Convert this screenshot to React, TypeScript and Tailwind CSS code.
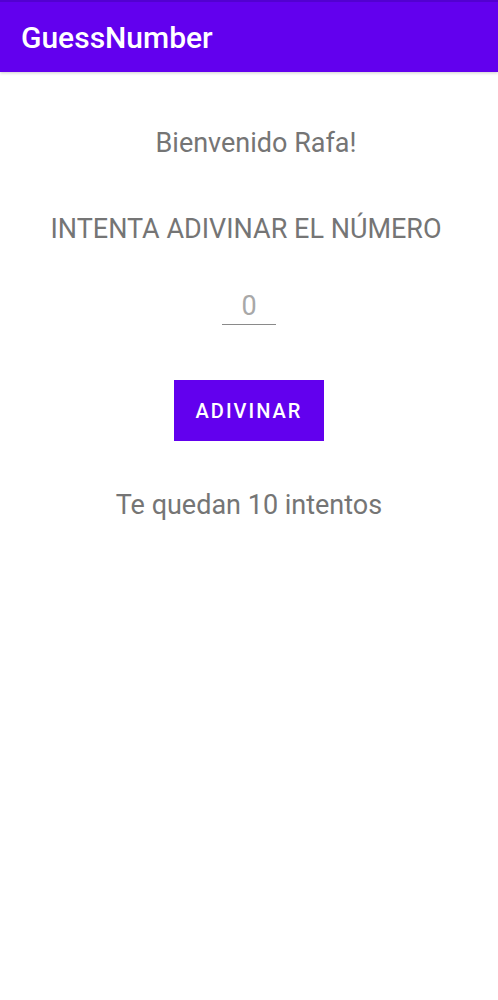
export default function App() {
  return (
    <div className="h-[1000px] w-[498px] bg-white" style={{ fontFamily: 'Roboto, "Liberation Sans", sans-serif' }}>
      <div className="h-[72px] border-t-2 border-[#5200d0] bg-[#6200ee] pl-[21px] shadow-[0_1px_3px_rgba(0,0,0,0.2)]">
        <div className="pt-[18px] text-[30px] font-medium leading-[36px] text-white">GuessNumber</div>
      </div>
      <div className="flex flex-col items-center text-[#757575]">
        <div className="mt-[55px] ml-[14px] text-[27px] leading-[32px]">Bienvenido Rafa!</div>
        <div className="mt-[54px] mr-[6px] text-[27px] leading-[32px]">INTENTA ADIVINAR EL NÚMERO</div>
        <div className="mt-[46px] flex h-[34px] w-[54px] items-start justify-center border-b border-[#8a8a8a] text-[27px] leading-[30px] text-[#a8a8a8]">
          0
        </div>
        <button className="mt-[55px] h-[61px] w-[150px] bg-[#6200ee] text-[20px] font-medium tracking-[2px] text-white">
          ADIVINAR
        </button>
        <div className="mt-[48px] text-[27px] leading-[32px]">Te quedan 10 intentos</div>
      </div>
    </div>
  );
}
